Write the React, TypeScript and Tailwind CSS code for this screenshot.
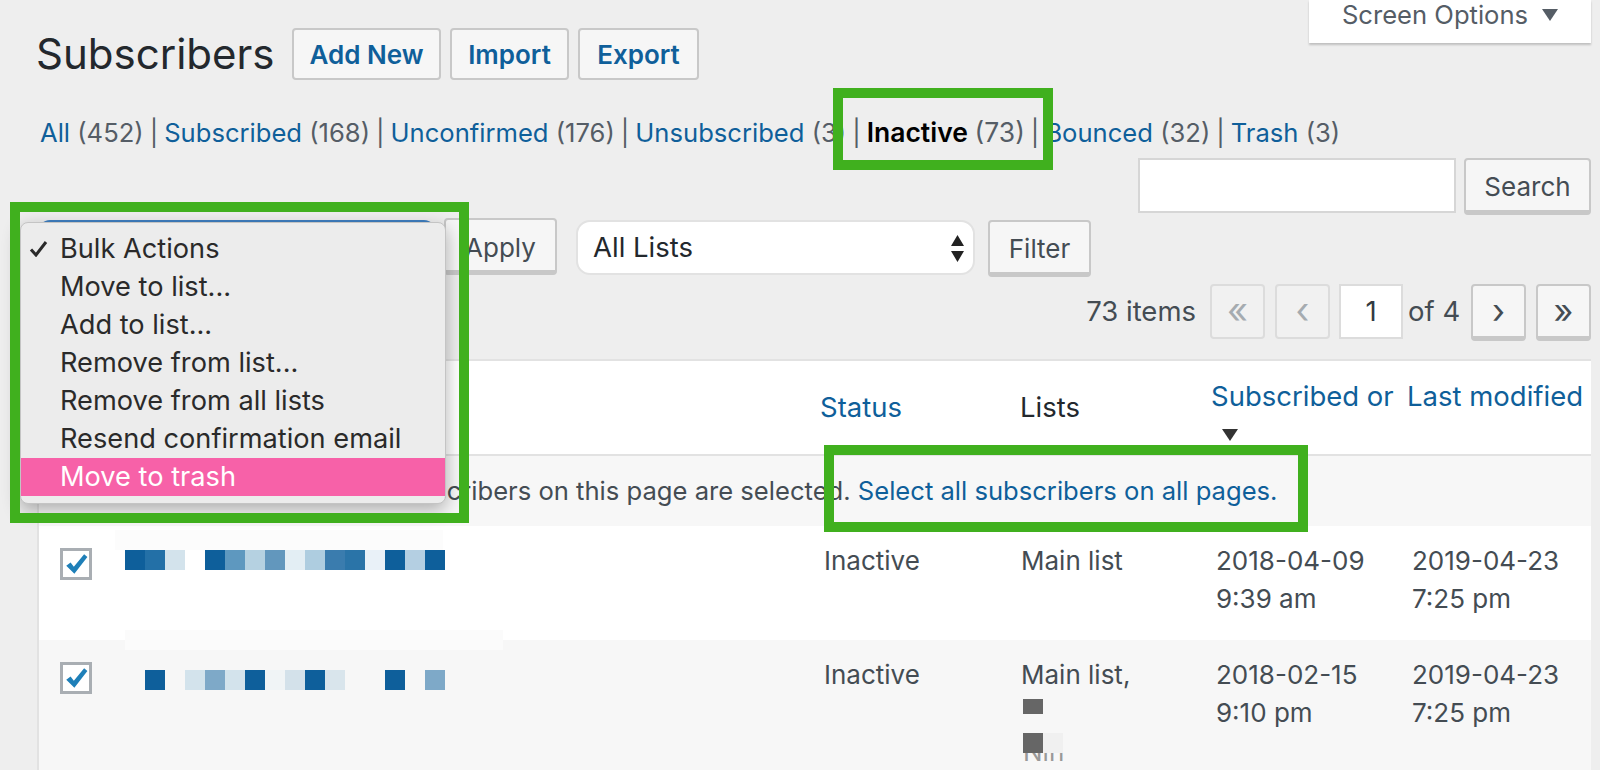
const font = 'font-["Inter","Liberation_Sans",sans-serif]';

const row1 = ['#0e5f9b', '#2370a7', '#d3e3ec', '', '#0e5f9b', '#5e98bf', '#b5d1e1', '#6297bd', '#e3eef4', '#aecde0', '#3a7cae', '#2a74a8', '#e9f1f8', '#0e5f9b', '#b4cfe2', '#0e5f9b'];
const row2 = ['', '#0e5f9b', '', '#d3e3ec', '#7ea9c8', '#d3e3ec', '#0e5f9b', '#f0f4f6', '#d3e1ea', '#0e5f9b', '#d9e5ec', '', '', '#0e5f9b', '', '#7ea9c8'];

const menu = ['Bulk Actions', 'Move to list...', 'Add to list...', 'Remove from list...', 'Remove from all lists', 'Resend confirmation email'];

function Btn({ children, className }: { children: React.ReactNode; className: string }) {
  return (
    <div className={`flex items-center justify-center rounded-[4px] border-2 border-[#c8c8c8] bg-[#f6f6f6] ${className}`}>
      {children}
    </div>
  );
}

function Count({ label, n, active }: { label: string; n: string; active?: boolean }) {
  return (
    <span className={active ? 'text-[26.5px] font-semibold text-black' : 'text-[#0f5f9a]'}>
      {label} <span className="font-normal text-[#555d66]">({n})</span>
    </span>
  );
}

function Check() {
  return (
    <div className="flex h-[32px] w-[32px] shrink-0 items-center justify-center border-[3px] border-[#a9aeb3] bg-white">
      <svg viewBox="0 0 24 24" className="h-[26px] w-[26px]">
        <path d="M3 13.5 L7 10.5 L10 14.5 L19.5 3 L22.5 5.5 L10.5 21 Z" fill="#1e7fb8" />
      </svg>
    </div>
  );
}

function Blocks({ cells }: { cells: string[] }) {
  return (
    <div className="flex h-[20px]">
      {cells.map((c, i) => (
        <div key={i} className="h-[20px] w-[20px]" style={{ backgroundColor: c || 'transparent' }} />
      ))}
    </div>
  );
}

function Frame({ className }: { className: string }) {
  return <div className={`absolute border-[10px] border-[#40b01e] ${className}`} />;
}

export default function App() {
  return (
    <div className={`relative h-[770px] w-[1600px] overflow-hidden bg-[#eeeeee] text-[25.6px] text-[#333a41] ${font}`}>
      {/* Title row */}
      <div className="flex h-[80px] items-start justify-between pr-[9px] pl-[36px]">
        <div className="flex items-center pt-[28px]">
          <h1 className="w-[256px] text-[42px] leading-[52px] text-[#23282d]">Subscribers</h1>
          <Btn className="h-[52px] w-[149px] text-[26px] font-semibold text-[#0f5f9a]">Add New</Btn>
          <Btn className="ml-[9px] h-[52px] w-[119px] text-[26px] font-semibold text-[#0f5f9a]">Import</Btn>
          <Btn className="ml-[9px] h-[52px] w-[121px] text-[26px] font-semibold text-[#0f5f9a]">Export</Btn>
        </div>
        <div className="flex h-[43px] w-[282px] items-center justify-center gap-[14px] bg-white pb-[14px] leading-[29px] text-[#555d66] shadow-[0_2px_2px_rgba(0,0,0,0.2)]">
          Screen Options
          <svg viewBox="0 0 16 12" className="h-[12px] w-[16px]">
            <path d="M0 0h16L8 12z" fill="#555d66" />
          </svg>
        </div>
      </div>

      {/* Status links */}
      <div className="mt-[38px] flex h-[30px] items-center gap-[6px] pl-[40px] whitespace-nowrap text-[#555d66]">
        <Count label="All" n="452" />|<Count label="Subscribed" n="168" />|<Count label="Unconfirmed" n="176" />|
        <Count label="Unsubscribed" n="3" />|<Count label="Inactive" n="73" active />|<Count label="Bounced" n="32" />|
        <Count label="Trash" n="3" />
      </div>

      {/* Search */}
      <div className="mt-[10px] flex h-[57px] items-start justify-end pr-[9px]">
        <div className="h-[55px] w-[318px] border-2 border-[#d6d6d6] bg-white" />
        <Btn className="ml-[8px] h-[57px] w-[127px] border-b-[5px] pt-[2px] text-[26px] text-[#444c53]">Search</Btn>
      </div>

      {/* Filters */}
      <div className="mt-[3px] flex h-[59px] items-start pl-[38px]">
        <div className="mt-[2px] h-[55px] w-[398px] rounded-[12px] border-2 border-[#3f7fc1] bg-white" />
        <Btn className="ml-[8px] h-[57px] w-[113px] border-b-[5px] pt-[4px] text-[26px] text-[#444c53]">Apply</Btn>
        <div className="mt-[2px] ml-[19px] flex h-[55px] w-[399px] items-center justify-between rounded-[14px] border-2 border-[#e2e2e2] bg-white pt-[1px] pr-[9px] pl-[15px] text-[27.5px] text-[#23282d]">
          All Lists
          <svg viewBox="0 0 13 27" className="h-[27px] w-[13px]">
            <path d="M6.5 0l6.5 11H0zM0 16h13L6.5 27z" fill="#222" />
          </svg>
        </div>
        <Btn className="mt-[2px] ml-[13px] h-[57px] w-[103px] border-b-[5px] pt-[2px] text-[26px] text-[#444c53]">Filter</Btn>
      </div>

      {/* Pagination */}
      <div className="mt-[7px] flex h-[55px] items-start justify-end pr-[9px] text-[27.5px]">
        <span className="mr-[14px] self-center text-[#444c53]">73 items</span>
        <div className="flex h-[55px] w-[55px] items-center justify-center rounded-[4px] border-2 border-[#dcdcdc] bg-[#f1f1f1] pb-[4px] text-[36px] text-[#a5abb0]">«</div>
        <div className="ml-[10px] flex h-[55px] w-[55px] items-center justify-center rounded-[4px] border-2 border-[#dcdcdc] bg-[#f1f1f1] pb-[4px] text-[36px] text-[#a5abb0]">‹</div>
        <div className="ml-[9px] flex h-[55px] w-[64px] items-center justify-center border-2 border-[#dcdcdc] bg-white text-[#333a41]">1</div>
        <span className="ml-[5px] w-[63px] self-center text-[#444c53]">of 4</span>
        <Btn className="h-[57px] w-[55px] border-b-[5px] pb-[2px] text-[34px] text-[#444c53]">›</Btn>
        <Btn className="ml-[10px] h-[57px] w-[55px] border-b-[5px] pb-[2px] text-[34px] text-[#444c53]">»</Btn>
      </div>

      {/* Table */}
      <div className="mt-[20px] mr-[9px] ml-[37px] border-l-2 border-[#e2e2e2]">
        <div className="grid h-[97px] grid-cols-[781px_200px_191px_1fr] items-center border-t-2 border-b-2 border-[#e2e2e2] bg-white text-[27.5px]">
          <div />
          <span className="text-[#0f5f9a]">Status</span>
          <span className="text-[#23282d]">Lists</span>
          <div className="relative flex gap-[14px] self-start pt-[15px] whitespace-nowrap text-[#0f5f9a]">
            <span className="w-[182px]">Subscribed or</span>
            <span>Last modified</span>
            <svg viewBox="0 0 16 12" className="absolute top-[68px] left-[11px] h-[12px] w-[16px]">
              <path d="M0 0h16L8 12z" fill="#333" />
            </svg>
          </div>
        </div>
        <div className="flex h-[70px] items-center justify-center bg-[#f7f7f7] pr-[38px] text-[#444c53]">
          All 73 subscribers on this page are selected.&nbsp;
          <span className="text-[#0f5f9a]">Select all subscribers on all pages.</span>
        </div>
        <div className="grid h-[114px] grid-cols-[86px_699px_197px_195px_196px_1fr] bg-white pt-[22px] text-[26px] leading-[38px] text-[#444c53]">
          <div className="pl-[21px]"><Check /></div>
          <div className="pt-[2px]"><Blocks cells={row1} /></div>
          <span className="-mt-[6px]">Inactive</span>
          <span className="-mt-[6px]">Main list</span>
          <span className="-mt-[6px]">2018-04-09<br />9:39 am</span>
          <span className="-mt-[6px]">2019-04-23<br />7:25 pm</span>
        </div>
        <div className="grid h-[130px] grid-cols-[86px_699px_197px_195px_196px_1fr] bg-[#f7f7f7] pt-[22px] text-[26px] leading-[38px] text-[#444c53]">
          <div className="pl-[21px]"><Check /></div>
          <div className="pt-[8px]"><Blocks cells={row2} /></div>
          <span className="-mt-[6px]">Inactive</span>
          <div className="-mt-[6px]">
            Main list,
            <div className="mt-[5px] ml-[2px] h-[15px] w-[20px] bg-[#666]" />
            <div className="mt-[19px] ml-[2px] flex">
              <div className="h-[20px] w-[20px] bg-[#666]" />
              <div className="h-[20px] w-[20px] bg-[#f0f0f0]" />
            </div>
            <div className="h-[16px] overflow-hidden pt-[1px] leading-[16px]">
              <div className="-mt-[10px] ml-[2px] text-[#999]">Nin</div>
            </div>
          </div>
          <span className="-mt-[6px]">2018-02-15<br />9:10 pm</span>
          <span className="-mt-[6px]">2019-04-23<br />7:25 pm</span>
        </div>
      </div>

      {/* Blur patches left over the names */}
      <div className="absolute top-[530px] left-[115px] h-[20px] w-[328px] bg-[#fcfcfc]" />
      <div className="absolute top-[630px] left-[125px] h-[20px] w-[378px] bg-[#fbfbfb]" />

      {/* Open bulk actions menu */}
      <div className="absolute top-[222px] left-[20px] h-[282px] w-[426px] rounded-[8px] border border-[#c4c4c4] bg-[#ececec] py-[7px] text-[27.2px] text-[#2a2a2a] shadow-[0_6px_18px_rgba(0,0,0,0.3)]">
        {menu.map((label, i) => (
          <div key={label} className="relative h-[38px] pl-[39px] leading-[38px]">
            {i === 0 && (
              <svg viewBox="0 0 19 17" className="absolute top-[10px] left-[8px] h-[17px] w-[19px]">
                <path d="M2 9.5L7 15L17 2" fill="none" stroke="#2a2a2a" strokeWidth="3" />
              </svg>
            )}
            {label}
          </div>
        ))}
        <div className="h-[38px] bg-[#f761a8] pl-[39px] leading-[38px] text-white">Move to trash</div>
      </div>

      {/* Annotation frames */}
      <Frame className="top-[202px] left-[10px] h-[321px] w-[459px]" />
      <Frame className="top-[88px] left-[833px] h-[82px] w-[220px]" />
      <Frame className="top-[445px] left-[824px] h-[87px] w-[484px]" />
    </div>
  );
}
